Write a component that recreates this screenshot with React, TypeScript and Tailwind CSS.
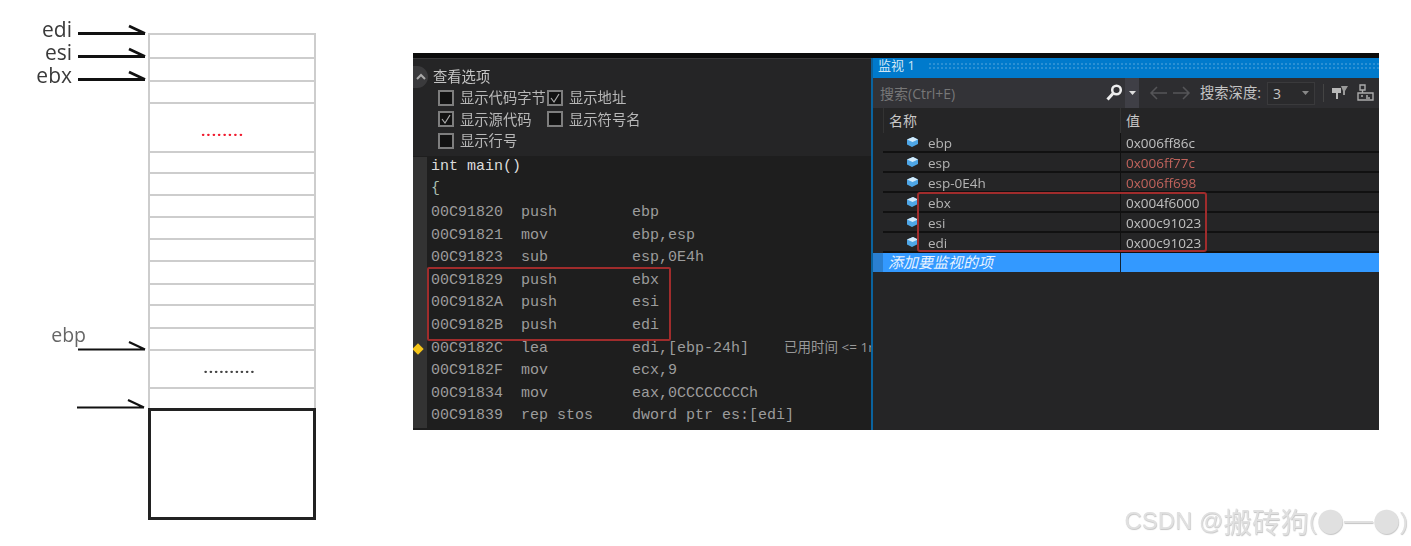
const sans = "font-['Open_Sans','Noto_Sans_CJK_SC',sans-serif]";

function Arrow({ thin, className }: { thin?: boolean; className: string }) {
  return (
    <svg width="70" height="14" viewBox="0 0 70 14" className={`absolute ${className}`}>
      <path d="M1 12.500H68M52 5L68 12.500" stroke="#111" strokeWidth={thin ? 2.2 : 2.8} fill="none" />
    </svg>
  );
}

const stackRows: {
  h: number;
  label?: string;
  arrow?: string;
  dots?: string;
  dotClass?: string;
}[] = [
  { h: 24, label: "edi", arrow: "left-[-73px] top-[-14px]" },
  { h: 23, label: "esi", arrow: "left-[-73px] top-[-15px]" },
  { h: 22, label: "ebx", arrow: "left-[-73px] top-[-15px]" },
  { h: 49, dots: "········", dotClass: "text-[#f01c30] pt-[13px] pr-[19px] tracking-[1.100px]" },
  { h: 21 },
  { h: 22 },
  { h: 22 },
  { h: 22 },
  { h: 22 },
  { h: 23 },
  { h: 21 },
  { h: 23 },
  { h: 22 },
  {
    h: 38,
    arrow: "left-[-73px] top-[-14px]",
    label: "ebp",
    dots: "··········",
    dotClass: "text-[#444] pt-[5px] pr-[5px] tracking-[0.900px]",
  },
  { h: 21 },
];

function StackDiagram() {
  return (
    <div className="w-[413px] shrink-0 pl-[148px] pt-[33px]">
      <div className={`w-[168px] flex flex-col ${sans}`}>
        {stackRows.map((r, i) => (
          <div
            key={i}
            style={{ height: r.h }}
            className="relative border-t-2 border-x-2 border-[#cdcdcd] flex items-center justify-center"
          >
            {r.arrow && <Arrow thin={i >= 13} className={r.arrow} />}
            {r.label &&
              (r.label === "ebp" ? (
                <span className="absolute right-[calc(100%+64px)] top-[-27px] text-[19.500px] leading-[22px] text-[#666]">
                  {r.label}
                </span>
              ) : (
                <span
                  className={`absolute right-[calc(100%+78px)] text-[21px] leading-[20px] text-[#3a3a3a] ${
                    r.label === "edi" ? "top-[-16px]" : "top-[-17px]"
                  }`}
                >
                  {r.label}
                </span>
              ))}
            {r.dots && <span className={`text-[15px] font-bold leading-none ${r.dotClass}`}>{r.dots}</span>}
          </div>
        ))}
        <div className="relative h-[112px] border-[3px] border-[#222] bg-white">
          <Arrow thin className="left-[-75px] top-[-16px]" />
        </div>
      </div>
    </div>
  );
}

function Box({ checked }: { checked?: boolean }) {
  return (
    <span className="w-[16px] h-[16px] shrink-0 border-2 border-[#7e7e7e] bg-[#121212] flex items-center justify-center">
      {checked && (
        <svg width="12" height="12" viewBox="0 0 12 12">
          <path d="M2 6l3 4 5-8" stroke="#aaa" strokeWidth="1.2" fill="none" />
        </svg>
      )}
    </span>
  );
}

function Opt({ checked, label }: { checked?: boolean; label: string }) {
  return (
    <div className="flex items-center gap-[6px] text-[14.300px] text-[#b8b8b8] whitespace-nowrap">
      <Box checked={checked} />
      <span>{label}</span>
    </div>
  );
}

const codeLines: { a: string; o: string; r: string; hint?: string; cur?: boolean }[] = [
  { a: "00C91820", o: "push", r: "ebp" },
  { a: "00C91821", o: "mov", r: "ebp,esp" },
  { a: "00C91823", o: "sub", r: "esp,0E4h" },
  { a: "00C91829", o: "push", r: "ebx" },
  { a: "00C9182A", o: "push", r: "esi" },
  { a: "00C9182B", o: "push", r: "edi" },
  { a: "00C9182C", o: "lea", r: "edi,[ebp-24h]", hint: "已用时间 <= 1r", cur: true },
  { a: "00C9182F", o: "mov", r: "ecx,9" },
  { a: "00C91834", o: "mov", r: "eax,0CCCCCCCCh" },
  { a: "00C91839", o: "rep stos", r: "dword ptr es:[edi]" },
];

function LeftPanel() {
  return (
    <div className="w-[458px] shrink-0 flex flex-col overflow-hidden">
      <div className={`h-[98px] bg-[#252526] border-t border-[#3a3a3c] relative ${sans}`}>
        <div className="flex items-center h-[19px] mt-[8px]">
          <span className="w-[15px] h-[22px] rounded-r-full bg-[#3a3a3c] flex items-center justify-center">
            <svg width="10" height="8" viewBox="0 0 10 8">
              <path d="M1 6l4-4 4 4" stroke="#aaa" strokeWidth="2" fill="none" />
            </svg>
          </span>
          <span className="ml-[5px] text-[14.300px] text-[#c4c4c4]">查看选项</span>
        </div>
        <div className="pl-[25px] pt-[1px] grid grid-cols-[109px_auto] justify-start auto-rows-[21.500px] items-center">
          <Opt label="显示代码字节" />
          <Opt checked label="显示地址" />
          <Opt checked label="显示源代码" />
          <Opt label="显示符号名" />
          <Opt label="显示行号" />
        </div>
      </div>
      <div className="flex-1 bg-[#1e1e1e] relative pt-[1px] font-['Liberation_Mono',monospace] text-[15px] text-[#9c9c9c] whitespace-pre">
        <div className="flex h-[21px] items-center">
          <span className="w-[14px] h-full bg-[#333333] shrink-0" />
          <span className="ml-[4px] text-[#dcdcdc]">int main()</span>
        </div>
        <div className="flex h-[24px] items-start">
          <span className="w-[14px] h-full bg-[#333333] shrink-0" />
          <span className="ml-[4px] text-[#a9bfb0]">{"{"}</span>
        </div>
        {codeLines.map((l) => (
          <div key={l.a} className="flex h-[22.600px] items-center">
            <span className="w-[14px] h-full bg-[#333333] shrink-0 flex items-center">
              {l.cur && <span className="w-[8px] h-[8px] ml-[1px] rotate-45 bg-[#f5c518]" />}
            </span>
            <span className="ml-[4px] w-[90px] shrink-0">{l.a}</span>
            <span className="w-[111px] shrink-0">{l.o}</span>
            <span className="w-[152px] shrink-0">{l.r}</span>
            {l.hint && <span className={`text-[13.500px] leading-[16px] mb-[3px] text-[#999] ${sans}`}>{l.hint}</span>}
          </div>
        ))}
        <div className="absolute left-[14px] top-[111px] w-[244px] h-[74px] border-2 border-[#a02c2c] rounded-[2px]" />
      </div>
    </div>
  );
}

function Cube() {
  return (
    <svg width="13" height="12" viewBox="0 0 13 12" className="shrink-0 mt-[-3px]">
      <path d="M1 3.500L7 1l5 2.500v4.500L6 11 1 8.500z" fill="#4ea6e6" />
      <path d="M1 3.500L6.500 6l5.500-2.500L7 1z" fill="#d4ecfc" />
    </svg>
  );
}

const watches = [
  { n: "ebp", v: "0x006ff86c", red: false },
  { n: "esp", v: "0x006ff77c", red: true },
  { n: "esp-0E4h", v: "0x006ff698", red: true },
  { n: "ebx", v: "0x004f6000", red: false },
  { n: "esi", v: "0x00c91023", red: false },
  { n: "edi", v: "0x00c91023", red: false },
];

function RightPanel() {
  return (
    <div className={`flex-1 flex flex-col border-l-2 border-[#0a639e] bg-[#252526] overflow-hidden ${sans}`}>
      <div className="h-[20px] bg-[#007acc] flex items-start pl-[5px] gap-[13px]">
        <span className="text-[13px] leading-[15px] text-[#cfe6f5]">监视 1</span>
        <div className="flex-1 h-[7px] mt-[4px] bg-[radial-gradient(#2b90d4_1px,transparent_1px)] bg-[length:4px_4px]" />
      </div>
      <div className="h-[30px] bg-[#2d2d30] flex items-center">
        <div className="w-[252px] h-full bg-[#333337] pl-[7px] flex items-center text-[14px] text-[#777]">
          搜索(Ctrl+E)
        </div>
        <svg width="18" height="18" viewBox="0 0 18 18" className="ml-[-20px] shrink-0">
          <circle cx="11.500" cy="6" r="4.300" stroke="#eee" strokeWidth="2.500" fill="none" />
          <path d="M8 9.500L2.500 15.500" stroke="#eee" strokeWidth="3" />
        </svg>
        <span className="ml-[2px] w-[14px] h-full bg-[#3f3f46] flex items-center justify-center">
          <svg width="7" height="4" viewBox="0 0 7 4">
            <path d="M0 0h7L3.500 4z" fill="#ddd" />
          </svg>
        </span>
        <svg width="42" height="14" viewBox="0 0 42 14" className="ml-[10px] shrink-0">
          <path d="M18 7H2M8 1L2 7l6 6M24 7h16M34 1l6 6-6 6" stroke="#555558" strokeWidth="1.500" fill="none" />
        </svg>
        <span className="ml-[9px] text-[14.300px] text-[#c4c4c4] whitespace-nowrap">搜索深度:</span>
        <div className="ml-[6px] w-[48px] h-[23px] shrink-0 bg-[#2a2a2c] border border-[#3a3a3c] flex items-center justify-between pl-[5px] pr-[5px] text-[14px] text-[#c4c4c4]">
          3
          <svg width="7" height="4" viewBox="0 0 7 4">
            <path d="M0 0h7L3.500 4z" fill="#888" />
          </svg>
        </div>
        <span className="ml-[8px] w-px h-[18px] bg-[#444] shrink-0" />
        <svg width="18" height="18" viewBox="0 0 18 18" className="ml-[7px] shrink-0">
          <path d="M1 4h9v5H7v6H5V9H1z" fill="#b8b8b8" />
          <path d="M10 2h7l-3 5v4h-2V7z" fill="#999" />
        </svg>
        <svg width="18" height="18" viewBox="0 0 18 18" className="ml-[8px] shrink-0">
          <path d="M3 1h5v5H3zM5.500 6v3M1 9h15v7H1zM4 12h2M9 12h2M9 14h4" stroke="#aaa" strokeWidth="1.400" fill="none" />
        </svg>
      </div>
      <div className="h-[25px] flex text-[14px] text-[#c8c8c8] pl-[10px]">
        <div className="w-[238px] pl-[5px] border-l border-[#333] border-r flex items-center">名称</div>
        <div className="pl-[5px] flex items-center">值</div>
      </div>
      <div className="relative">
        {watches.map((w) => (
          <div key={w.n} className="h-[20px] flex ml-[10px] border-b-2 border-[#111] text-[13.500px] leading-none">
            <div className="w-[238px] flex items-center pl-[23px] pt-[3px] gap-[9px] border-r border-[#111] text-[#b4b4b4]">
              <Cube />
              {w.n}
            </div>
            <div className={`pl-[5px] pt-[3px] flex items-center ${w.red ? "text-[#c0635c]" : "text-[#c0c0c0]"}`}>
              {w.v}
            </div>
          </div>
        ))}
        <div className="absolute left-[44px] top-[59px] w-[290px] h-[60px] border-2 border-[#a02c2c] rounded-[3px]" />
      </div>
      <div className="h-[19px] flex bg-[#3399ff]">
        <div className="w-[10px] bg-[#2a7fd0]" />
        <div className="w-[238px] pl-[5px] flex items-center italic text-[15px] text-[#e8f3ff] border-r border-[#123] whitespace-nowrap">
          添加要监视的项
        </div>
      </div>
    </div>
  );
}

export default function App() {
  return (
    <div className="relative w-[1411px] h-[546px] bg-white flex overflow-hidden">
      <div className="blur-[0.4px] flex w-full">
        <StackDiagram />
        <div className="w-[966px] h-[377px] mt-[53px] shrink-0 flex flex-col">
          <div className="h-[5px] bg-[#0c0c0c]" />
          <div className="flex-1 flex min-h-0">
            <LeftPanel />
            <RightPanel />
          </div>
        </div>
      </div>
      <div className="absolute right-[3px] bottom-[7px] h-[36px] flex items-center text-[24px] text-[#e0e0e0] whitespace-nowrap font-['Liberation_Sans',sans-serif] [text-shadow:0.5px_0.5px_1px_#c4c4c4]">
        <span>CSDN @</span>
        <span className="text-[28.500px] font-['Noto_Sans_CJK_SC',sans-serif]">搬砖狗</span>
        <span>(</span>
        <span className="text-[27px] font-['Noto_Sans_CJK_SC',sans-serif]">●</span>
        <span className="text-[29px]">—</span>
        <span className="text-[27px] font-['Noto_Sans_CJK_SC',sans-serif]">●</span>
        <span>)</span>
      </div>
    </div>
  );
}
